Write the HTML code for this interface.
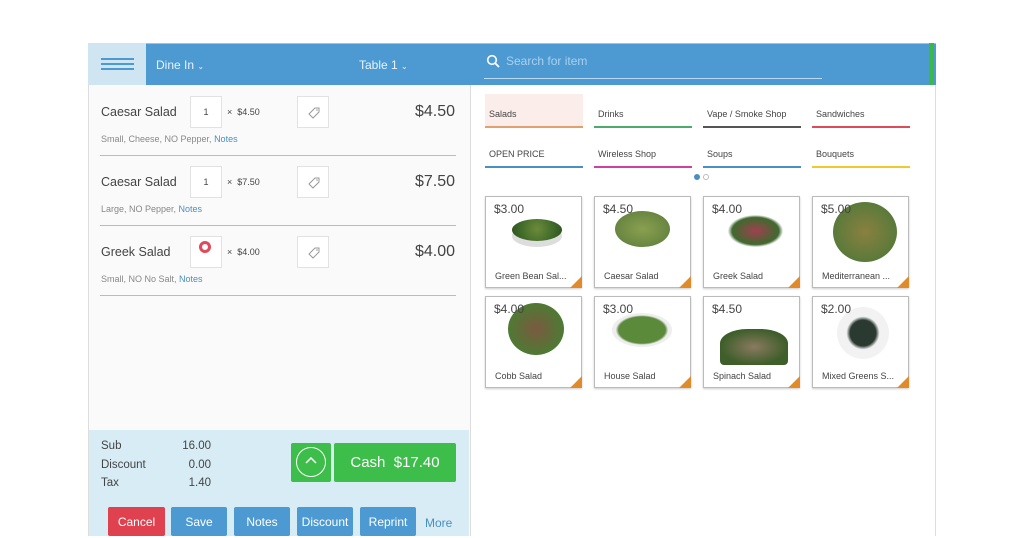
<!DOCTYPE html>
<html><head><meta charset="utf-8"><style>
*{box-sizing:border-box;margin:0;padding:0}
body{width:1024px;height:536px;background:#fff;position:relative;overflow:hidden;font-family:"Liberation Sans",sans-serif;color:#444}
.a{position:absolute}
.hdr{left:88px;top:43px;width:848px;height:42px;background:#4d9ad3;border-top:1px solid #bbb}
.ham{left:88px;top:43px;width:58px;height:42px;background:#cfe6f2}
.ham i{position:absolute;left:13px;width:33px;height:2px;background:#4d9ad3}
.w{color:#e8f3fb;font-size:12px}
.w small{font-size:8px}
.left{left:88px;top:85px;width:382px;height:451px;background:#fafafa;border-left:1px solid #ddd}
.right{left:470px;top:85px;width:466px;height:451px;background:#fff;border-left:1px solid #ddd;border-right:1px solid #ddd}
.name{font-size:12.5px;color:#444}
.sub{font-size:9px;color:#888}
.sub b{font-weight:normal;color:#4a8fbf}
.box{width:32px;height:32px;border:1px solid #e2e2e2;background:#fff;font-size:9px;text-align:center;line-height:30px}
.box svg{position:absolute;left:9px;top:9px}
.price{font-size:16px;color:#444;right:0}
.sep{left:100px;width:356px;height:1px;background:#bbb}
.cat{width:98px;font-size:9px;color:#444;padding-left:4px}
.card{width:97px;height:92px;border:1px solid #bbb;background:#fff;box-shadow:0 1px 2px #ccc}
.card .p{position:absolute;left:8px;top:5px;font-size:12px;color:#444}
.card .n{position:absolute;left:9px;top:74px;font-size:9px;color:#444;white-space:nowrap}
.card .c{position:absolute;right:-1px;bottom:-1px;width:0;height:0;border-left:12px solid transparent;border-bottom:12px solid #e08a2a}
.food{position:absolute;left:26px;top:20px;width:50px;height:30px;border-radius:50%;background:radial-gradient(circle at 50% 45%,#6d8a3a,#3f6a2a 60%,#2c4e20)}
.btn{top:507px;height:29px;background:#4d9ad3;color:#fff;font-size:12px;text-align:center;line-height:31px;border-radius:2px}
</style></head><body>
<div class="a hdr"></div>
<div class="a ham"><i style="top:15px"></i><i style="top:20px"></i><i style="top:25px"></i></div>
<div class="a w" style="left:156px;top:58px">Dine In <small>⌄</small></div>
<div class="a w" style="left:359px;top:58px">Table 1 <small>⌄</small></div>
<svg class="a" style="left:486px;top:54px" width="14" height="14" viewBox="0 0 14 14"><circle cx="6" cy="6" r="4.3" fill="none" stroke="#fff" stroke-width="1.6"/><path d="M9 9l4 4" stroke="#fff" stroke-width="1.8"/></svg>
<div class="a" style="left:506px;top:54px;font-size:12px;color:#a9d0ee">Search for item</div>
<div class="a" style="left:484px;top:78px;width:338px;height:1px;background:#b8dbf0"></div>
<div class="a" style="left:929px;top:43px;width:5px;height:42px;background:#3cb846"></div>
<div class="a left"></div>
<div class="a right"></div>

<div class="a name" style="left:101px;top:105px">Caesar Salad</div>
<div class="a box" style="left:190px;top:96px">1</div>
<div class="a sub" style="left:227px;top:107px;color:#444">× &nbsp;$4.50</div>
<div class="a box" style="left:297px;top:96px"><svg width="14" height="14" viewBox="0 0 14 14"><path d="M2 8L8 2H12V6L6 12Z" fill="none" stroke="#999"/><circle cx="10" cy="4" r="0.8" fill="#999"/></svg></div>
<div class="a price" style="left:415px;top:103px">$4.50</div>
<div class="a sub" style="left:101px;top:134px">Small, Cheese, NO Pepper, <b>Notes</b></div>
<div class="a sep" style="top:155px"></div>

<div class="a name" style="left:101px;top:175px">Caesar Salad</div>
<div class="a box" style="left:190px;top:166px">1</div>
<div class="a sub" style="left:227px;top:177px;color:#444">× &nbsp;$7.50</div>
<div class="a box" style="left:297px;top:166px"><svg width="14" height="14" viewBox="0 0 14 14"><path d="M2 8L8 2H12V6L6 12Z" fill="none" stroke="#999"/><circle cx="10" cy="4" r="0.8" fill="#999"/></svg></div>
<div class="a price" style="left:415px;top:173px">$7.50</div>
<div class="a sub" style="left:101px;top:204px">Large, NO Pepper, <b>Notes</b></div>
<div class="a sep" style="top:225px"></div>

<div class="a name" style="left:101px;top:245px">Greek Salad</div>
<div class="a box" style="left:190px;top:236px"></div>
<div class="a" style="left:199px;top:241px;width:12px;height:12px;border-radius:50%;border:3px solid #e04a5a"></div>
<div class="a sub" style="left:227px;top:247px;color:#444">× &nbsp;$4.00</div>
<div class="a box" style="left:297px;top:236px"><svg width="14" height="14" viewBox="0 0 14 14"><path d="M2 8L8 2H12V6L6 12Z" fill="none" stroke="#999"/><circle cx="10" cy="4" r="0.8" fill="#999"/></svg></div>
<div class="a price" style="left:415px;top:243px">$4.00</div>
<div class="a sub" style="left:101px;top:274px">Small, NO No Salt, <b>Notes</b></div>
<div class="a sep" style="top:295px"></div>

<div class="a" style="left:89px;top:430px;width:380px;height:106px;background:#d8ecf5"></div>
<div class="a" style="left:101px;top:437px;font-size:11.5px;line-height:18.5px;color:#444">Sub<br>Discount<br>Tax</div>
<div class="a" style="left:170px;top:437px;width:41px;text-align:right;font-size:11.5px;line-height:18.5px;color:#444">16.00<br>0.00<br>1.40</div>
<div class="a" style="left:291px;top:443px;width:40px;height:39px;background:#3dbe4a;border-radius:2px"></div>
<div class="a" style="left:296px;top:447px;width:30px;height:30px;border:1.5px solid #fff;border-radius:50%"></div>
<svg class="a" style="left:305px;top:457px" width="12" height="8" viewBox="0 0 12 8"><path d="M1 6L6 1L11 6" fill="none" stroke="#fff" stroke-width="1.5"/></svg>
<div class="a" style="left:334px;top:443px;width:122px;height:39px;background:#3dbe4a;border-radius:2px;color:#fff;font-size:15px;text-align:center;line-height:39px">Cash &nbsp;$17.40</div>
<div class="a btn" style="left:108px;width:57px;background:#e0414f">Cancel</div>
<div class="a btn" style="left:171px;width:56px">Save</div>
<div class="a btn" style="left:234px;width:56px">Notes</div>
<div class="a btn" style="left:297px;width:56px">Discount</div>
<div class="a btn" style="left:360px;width:56px">Reprint</div>
<div class="a" style="left:425px;top:516px;font-size:12px;color:#4a8fbf">More</div>

<div class="a" style="left:485px;top:94px;width:98px;height:33px;background:#fbeeea"></div>
<div class="a cat" style="left:485px;top:109px">Salads</div>
<div class="a" style="left:485px;top:126px;width:98px;height:2px;background:#e0a070"></div>
<div class="a cat" style="left:594px;top:109px">Drinks</div>
<div class="a" style="left:594px;top:126px;width:98px;height:2px;background:#4caa6a"></div>
<div class="a cat" style="left:703px;top:109px">Vape / Smoke Shop</div>
<div class="a" style="left:703px;top:126px;width:98px;height:2px;background:#555"></div>
<div class="a cat" style="left:812px;top:109px">Sandwiches</div>
<div class="a" style="left:812px;top:126px;width:98px;height:2px;background:#e04a5a"></div>
<div class="a cat" style="left:485px;top:149px">OPEN PRICE</div>
<div class="a" style="left:485px;top:166px;width:98px;height:2px;background:#4a8fbf"></div>
<div class="a cat" style="left:594px;top:149px">Wireless Shop</div>
<div class="a" style="left:594px;top:166px;width:98px;height:2px;background:#d040a0"></div>
<div class="a cat" style="left:703px;top:149px">Soups</div>
<div class="a" style="left:703px;top:166px;width:98px;height:2px;background:#4a8fbf"></div>
<div class="a cat" style="left:812px;top:149px">Bouquets</div>
<div class="a" style="left:812px;top:166px;width:98px;height:2px;background:#f0c830"></div>
<div class="a" style="left:694px;top:174px;width:6px;height:6px;border-radius:50%;background:#4a8fbf"></div>
<div class="a" style="left:703px;top:174px;width:6px;height:6px;border-radius:50%;border:1px solid #bbb"></div>

<div class="a card" style="left:485px;top:196px"><div class="food" style="top:22px;height:22px;box-shadow:0 6px 0 #ddd"></div><div class="p">$3.00</div><div class="n">Green Bean Sal...</div><div class="c"></div></div>
<div class="a card" style="left:594px;top:196px"><div class="food" style="left:20px;width:55px;height:36px;top:14px;background:radial-gradient(#8aa050,#5a7a3a)"></div><div class="p">$4.50</div><div class="n">Caesar Salad</div><div class="c"></div></div>
<div class="a card" style="left:703px;top:196px"><div class="food" style="left:24px;width:55px;height:32px;top:18px;background:radial-gradient(#a04050,#3e6a2e 60%,#eee 70%)"></div><div class="p">$4.00</div><div class="n">Greek Salad</div><div class="c"></div></div>
<div class="a card" style="left:812px;top:196px"><div class="food" style="left:20px;width:64px;height:60px;top:5px;background:radial-gradient(#8a8040,#5a7a3a 70%)"></div><div class="p">$5.00</div><div class="n">Mediterranean ...</div><div class="c"></div></div>
<div class="a card" style="left:485px;top:296px"><div class="food" style="left:22px;width:56px;height:52px;top:6px;background:radial-gradient(#7a5a40,#4e7a34 70%)"></div><div class="p">$4.00</div><div class="n">Cobb Salad</div><div class="c"></div></div>
<div class="a card" style="left:594px;top:296px"><div class="food" style="left:17px;width:60px;height:34px;top:16px;background:radial-gradient(#5a8a3a 55%,#eee 62%)"></div><div class="p">$3.00</div><div class="n">House Salad</div><div class="c"></div></div>
<div class="a card" style="left:703px;top:296px"><div class="food" style="left:16px;width:68px;height:36px;top:32px;border-radius:40% 40% 4px 4px;background:radial-gradient(#8a7a60,#3e5e2a 70%)"></div><div class="p">$4.50</div><div class="n">Spinach Salad</div><div class="c"></div></div>
<div class="a card" style="left:812px;top:296px"><div class="food" style="left:24px;width:52px;height:52px;top:10px;background:radial-gradient(#2a3a30 35%,#f2f2f2 45%)"></div><div class="p">$2.00</div><div class="n">Mixed Greens S...</div><div class="c"></div></div>
</body></html>
